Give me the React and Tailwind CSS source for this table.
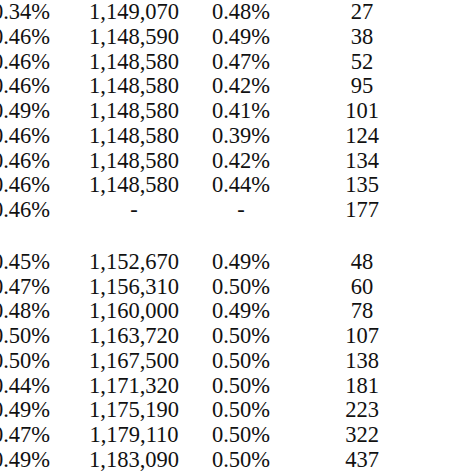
export default function App() {
  const top = [
    ["0.34%", "1,149,070", "0.48%", "27"],
    ["0.46%", "1,148,590", "0.49%", "38"],
    ["0.46%", "1,148,580", "0.47%", "52"],
    ["0.46%", "1,148,580", "0.42%", "95"],
    ["0.49%", "1,148,580", "0.41%", "101"],
    ["0.46%", "1,148,580", "0.39%", "124"],
    ["0.46%", "1,148,580", "0.42%", "134"],
    ["0.46%", "1,148,580", "0.44%", "135"],
    ["0.46%", "-", "-", "177"],
  ];
  const bottom = [
    ["0.45%", "1,152,670", "0.49%", "48"],
    ["0.47%", "1,156,310", "0.50%", "60"],
    ["0.48%", "1,160,000", "0.49%", "78"],
    ["0.50%", "1,163,720", "0.50%", "107"],
    ["0.50%", "1,167,500", "0.50%", "138"],
    ["0.44%", "1,171,320", "0.50%", "181"],
    ["0.49%", "1,175,190", "0.50%", "223"],
    ["0.47%", "1,179,110", "0.50%", "322"],
    ["0.49%", "1,183,090", "0.50%", "437"],
  ];
  const Row = ({ r }) => (
    <div className="flex h-[24.75px] items-center">
      <div className="w-[100px] pr-[21px] text-right">{r[0]}</div>
      <div className="w-[126px] text-center">{r[1]}</div>
      <div className="w-[88px] text-center">{r[2]}</div>
      <div className="w-[154px] text-center">{r[3]}</div>
    </div>
  );
  return (
    <div className="w-[474px] h-[474px] overflow-hidden bg-white">
      <div
        className="ml-[-29px] text-[22.5px] leading-none text-[#111]"
        style={{ fontFamily: '"Liberation Serif", serif' }}
      >
        {top.map((r, i) => (
          <Row key={"t" + i} r={r} />
        ))}
        <div className="h-[27px]" />
        {bottom.map((r, i) => (
          <Row key={"b" + i} r={r} />
        ))}
      </div>
    </div>
  );
}
